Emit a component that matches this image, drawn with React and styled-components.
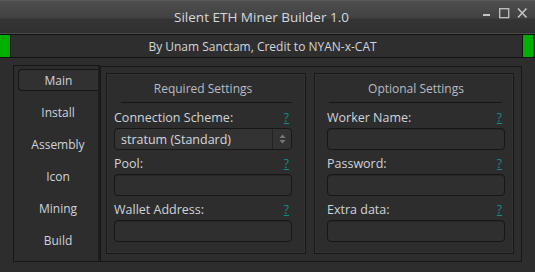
import React from "react";
import styled, { createGlobalStyle } from "styled-components";

const GlobalStyle = createGlobalStyle`
  html, body {
    margin: 0;
    padding: 0;
    background: #2d2d2d;
  }
  * {
    box-sizing: border-box;
  }
`;

const Window = styled.div`
  width: 535px;
  height: 272px;
  display: flex;
  flex-direction: column;
  background: #2d2d2d;
  font-family: "Open Sans", "Liberation Sans", sans-serif;
  color: #d2d6dc;
  overflow: hidden;
`;

const TitleBar = styled.div`
  height: 34px;
  display: flex;
  align-items: center;
  justify-content: center;
  position: relative;
  padding-right: 12px;
  background: linear-gradient(#4e4e4e 0px, #414141 17px, #343434 18px, #303030 33px);
  border-top: 1px solid #5a5a5a;
  border-bottom: 1px solid #4a4a4a;
  font-size: 13.5px;
  color: #d6d8dc;
`;

const Controls = styled.div`
  position: absolute;
  right: 7px;
  top: 6px;
  display: flex;
  gap: 7px;
  align-items: center;
`;

const Banner = styled.div`
  height: 24px;
  display: flex;
  border-top: 1px solid #121212;
  border-bottom: 1px solid #121212;
  background: #2e2e2e;
`;

const Green = styled.div`
  width: 11px;
  background: #00b000;
  border-${(p) => (p.$side === "left" ? "right" : "left")}: 1px solid #121212;
  margin-${(p) => p.$side}: ${(p) => (p.$side === "right" ? "2px" : "0")};
`;

const BannerText = styled.div`
  flex: 1;
  display: flex;
  align-items: center;
  justify-content: center;
  padding-right: 8px;
  font-size: 12px;
  color: #d2d6dc;
`;

const Body = styled.div`
  flex: 1;
  display: flex;
  padding: 7px 13px 10px 13px;
`;

const Nav = styled.div`
  width: 87px;
  display: flex;
  flex-direction: column;
  padding: 3px 0 0 4px;
  border: 1px solid #171717;
  border-right: 2px solid #1c1c1c;
`;

const NavItem = styled.div`
  height: ${(p) => (p.$active ? "22px" : "32px")};
  margin-bottom: ${(p) => (p.$active ? "5px" : "0")};
  display: flex;
  align-items: center;
  justify-content: center;
  font-size: 12px;
  color: #d0d4dc;
  ${(p) =>
    p.$active &&
    `
    border: 1px solid #161616;
    border-right: none;
    border-radius: 4px 0 0 4px;
    background: #313131;
  `}
`;

const Frame = styled.div`
  flex: 1;
  display: flex;
  gap: 8px;
  margin-top: 1px;
  padding: 6px 6px 7px 5px;
  border: 1px solid #171717;
`;

const Group = styled.div`
  width: 200px;
  display: flex;
  flex-direction: column;
  padding: 0 ${(p) => p.$padRight}px 0 ${(p) => p.$padLeft}px;
  border: 1px solid #181818;
  box-shadow: inset 0 0 0 1px #333;
`;

const GroupTitle = styled.div`
  height: 28px;
  display: flex;
  align-items: center;
  justify-content: center;
  font-size: 12px;
  color: #b8bcc4;
`;

const Divider = styled.div`
  height: 1px;
  margin: 0 ${(p) => p.$right}px 6px ${(p) => p.$left}px;
  background: #161616;
`;

const Field = styled.div`
  display: flex;
  flex-direction: column;
  margin-bottom: 5px;
`;

const LabelRow = styled.div`
  height: 16px;
  display: flex;
  align-items: center;
  justify-content: space-between;
  margin-bottom: 3px;
  font-size: 12.5px;
  color: #d0d4da;
`;

const Help = styled.span`
  color: #0f8f8c;
  text-decoration: underline;
  font-size: 12px;
  margin-right: 3px;
`;

const Input = styled.div`
  height: 22px;
  border: 1px solid #171717;
  border-radius: 4px;
  background: #2f2f2f;
  box-shadow: inset 0 1px 0 #272727;
`;

const Select = styled.div`
  height: 22px;
  display: flex;
  align-items: center;
  border: 1px solid #171717;
  border-radius: 4px;
  background: #333333;
  font-size: 12.5px;
  color: #d4d8de;
`;

const SelectText = styled.div`
  flex: 1;
  padding-left: 6px;
`;

const Spin = styled.div`
  width: 19px;
  height: 100%;
  display: flex;
  align-items: center;
  justify-content: center;
  border-left: 1px solid #222;
`;

const Minimize = () => (
  <svg width="10" height="12" viewBox="0 0 10 12">
    <rect x="1" y="7" width="7" height="2" fill="#c4c4c4" />
  </svg>
);

const Maximize = () => (
  <svg width="11" height="12" viewBox="0 0 11 12">
    <rect x="0.7" y="1.7" width="9" height="9" fill="none" stroke="#c4c4c4" strokeWidth="1.3" />
  </svg>
);

const Close = () => (
  <svg width="11" height="12" viewBox="0 0 11 12">
    <path d="M1 1.5 L9.5 10.5 M9.5 1.5 L1 10.5" stroke="#c4c4c4" strokeWidth="1.6" />
  </svg>
);

const SpinArrows = () => (
  <svg width="7" height="10" viewBox="0 0 7 10">
    <path d="M3.5 0.5 L6.5 4 L0.5 4 Z" fill="#777" />
    <path d="M3.5 9.5 L6.5 6 L0.5 6 Z" fill="#777" />
  </svg>
);

const tabs = ["Main", "Install", "Assembly", "Icon", "Mining", "Build"];

const FieldBox = ({ label, select }) => (
  <Field>
    <LabelRow>
      <span>{label}</span>
      <Help>?</Help>
    </LabelRow>
    {select ? (
      <Select>
        <SelectText>{select}</SelectText>
        <Spin>
          <SpinArrows />
        </Spin>
      </Select>
    ) : (
      <Input />
    )}
  </Field>
);

const App = () => {
  return (
    <>
      <GlobalStyle />
      <Window>
        <TitleBar>
          Silent ETH Miner Builder 1.0
          <Controls>
            <Minimize />
            <Maximize />
            <Close />
          </Controls>
        </TitleBar>
        <Banner>
          <Green $side="left" />
          <BannerText>By Unam Sanctam, Credit to NYAN-x-CAT</BannerText>
          <Green $side="right" />
        </Banner>
        <Body>
          <Nav>
            {tabs.map((t, i) => (
              <NavItem key={t} $active={i === 0}>
                {t}
              </NavItem>
            ))}
          </Nav>
          <Frame>
            <Group $padLeft={7} $padRight={13}>
              <GroupTitle>Required Settings</GroupTitle>
              <Divider $left={7} $right={0} />
              <FieldBox label="Connection Scheme:" select="stratum (Standard)" />
              <FieldBox label="Pool:" />
              <FieldBox label="Wallet Address:" />
            </Group>
            <Group $padLeft={12} $padRight={8}>
              <GroupTitle>Optional Settings</GroupTitle>
              <Divider $left={2} $right={3} />
              <FieldBox label="Worker Name:" />
              <FieldBox label="Password:" />
              <FieldBox label="Extra data:" />
            </Group>
          </Frame>
        </Body>
      </Window>
    </>
  );
};

export default App;
